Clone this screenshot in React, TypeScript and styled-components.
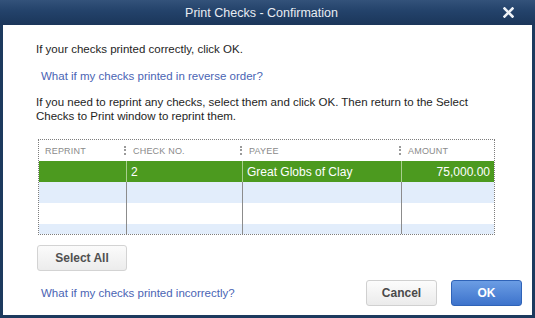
import React from "react";
import styled, { createGlobalStyle } from "styled-components";

const GlobalStyle = createGlobalStyle`
  html, body {
    margin: 0;
    padding: 0;
    background: #ffffff;
  }
  body {
    font-family: "Liberation Sans", Arial, sans-serif;
  }
`;

const Dialog = styled.div`
  width: 535px;
  height: 318px;
  display: flex;
  flex-direction: column;
  box-sizing: border-box;
`;

const TitleBar = styled.div`
  height: 25px;
  flex-shrink: 0;
  display: flex;
  align-items: center;
  justify-content: center;
  position: relative;
  padding-right: 12px;
  background: linear-gradient(to bottom, #33527a 0%, #23426a 45%, #1b365a 100%);
  color: #e8ecf2;
  font-size: 12.5px;
`;

const CloseButton = styled.span`
  position: absolute;
  right: 21px;
  top: 7px;
  width: 11px;
  height: 11px;
  display: flex;
`;

const Body = styled.div`
  flex: 1;
  display: flex;
  flex-direction: column;
  border: 3px solid #1d3a5e;
  border-top: none;
  background: #ffffff;
  padding: 17px 36px 9px 33px;
  font-size: 11.5px;
  color: #1e1e1e;
`;

const Line = styled.div<{ $gap?: number }>`
  line-height: 14px;
  margin-top: ${(p) => p.$gap ?? 0}px;
`;

const Link = styled.a<{ $indent?: number; $gap?: number }>`
  display: block;
  line-height: 14px;
  color: #4a64b4;
  text-decoration: none;
  cursor: pointer;
  margin-left: ${(p) => p.$indent ?? 0}px;
  margin-top: ${(p) => p.$gap ?? 0}px;
`;

const Table = styled.div`
  margin-top: 16px;
  margin-left: 2px;
  width: 455px;
  height: 94px;
  overflow: hidden;
  border: 1px dotted #7d7d7d;
  display: grid;
  grid-template-columns: 88px 116px 159px 92px;
  grid-auto-rows: 21px;
  font-size: 12px;
`;

const HeadCell = styled.div<{ $mark?: boolean }>`
  position: relative;
  display: flex;
  align-items: center;
  padding-left: 6px;
  font-size: 9px;
  letter-spacing: 0.2px;
  color: #8a8a8a;
  background: #ffffff;

  &::before {
    content: "";
    display: ${(p) => (p.$mark ? "block" : "none")};
    position: absolute;
    left: -3px;
    top: 6px;
    height: 9px;
    border-left: 2px dotted #9a9a9a;
  }
`;

const Cell = styled.div<{ $tone: "sel" | "alt" | "plain"; $right?: boolean; $last?: boolean }>`
  display: flex;
  align-items: center;
  justify-content: ${(p) => (p.$right ? "flex-end" : "flex-start")};
  padding: 0 4px;
  background: ${(p) =>
    p.$tone === "sel" ? "#4c9a1f" : p.$tone === "alt" ? "#e2edfb" : "#ffffff"};
  color: ${(p) => (p.$tone === "sel" ? "#ffffff" : "#222222")};
  border-right: ${(p) =>
    p.$last ? "none" : p.$tone === "sel" ? "1px solid #a9cf8f" : "1px solid #8c8c8c"};
`;

const SelectAllButton = styled.button`
  margin-top: 10px;
  margin-left: 1px;
  width: 90px;
  height: 26px;
  border: 1px solid #d3d3d3;
  border-radius: 3px;
  background: linear-gradient(to bottom, #fbfbfb, #ececec);
  color: #505050;
  font-family: inherit;
  font-size: 12px;
  font-weight: bold;
`;

const Footer = styled.div`
  margin-top: 9px;
  display: flex;
  align-items: center;
`;

const Spacer = styled.div`
  flex: 1;
`;

const DialogButton = styled.button<{ $primary?: boolean }>`
  width: 71px;
  height: 26px;
  margin-left: ${(p) => (p.$primary ? 14 : 0)}px;
  margin-right: ${(p) => (p.$primary ? -26 : 0)}px;
  border-radius: 3px;
  font-family: inherit;
  font-size: 12px;
  font-weight: bold;
  border: 1px solid ${(p) => (p.$primary ? "#2f63b8" : "#d0d0d0")};
  color: ${(p) => (p.$primary ? "#ffffff" : "#4a4a4a")};
  background: ${(p) =>
    p.$primary
      ? "linear-gradient(to bottom, #6b9de4, #3d73cc)"
      : "linear-gradient(to bottom, #fcfcfc, #ebebeb)"};
`;

type Row = { check: string; payee: string; amount: string };

const rows: Row[] = [
  { check: "2", payee: "Great Globs of Clay", amount: "75,000.00" },
  { check: "", payee: "", amount: "" },
  { check: "", payee: "", amount: "" },
  { check: "", payee: "", amount: "" },
];

const headers = ["REPRINT", "CHECK NO.", "PAYEE", "AMOUNT"];

const CloseIcon = () => (
  <svg width="11" height="11" viewBox="0 0 11 11">
    <path d="M1.5 1.5 L9.5 9.5 M9.5 1.5 L1.5 9.5" stroke="#eef2f7" strokeWidth="2.6" strokeLinecap="square" />
  </svg>
);

export default function App() {
  return (
    <>
      <GlobalStyle />
      <Dialog>
        <TitleBar>
          Print Checks - Confirmation
          <CloseButton>
            <CloseIcon />
          </CloseButton>
        </TitleBar>
        <Body>
          <Line>If your checks printed correctly, click OK.</Line>
          <Link $indent={5} $gap={13}>What if my checks printed in reverse order?</Link>
          <Line $gap={12}>
            If you need to reprint any checks, select them and click OK. Then return to the Select
            <br />
            Checks to Print window to reprint them.
          </Line>
          <Table>
            {headers.map((h, i) => (
              <HeadCell key={h} $mark={i > 0}>
                {h}
              </HeadCell>
            ))}
            {rows.map((r, i) => {
              const tone = i === 0 ? "sel" : i % 2 === 1 ? "alt" : "plain";
              return (
                <React.Fragment key={i}>
                  <Cell $tone={tone} />
                  <Cell $tone={tone}>{r.check}</Cell>
                  <Cell $tone={tone}>{r.payee}</Cell>
                  <Cell $tone={tone} $right $last>
                    {r.amount}
                  </Cell>
                </React.Fragment>
              );
            })}
          </Table>
          <SelectAllButton>Select All</SelectAllButton>
          <Footer>
            <Link $indent={5}>What if my checks printed incorrectly?</Link>
            <Spacer />
            <DialogButton>Cancel</DialogButton>
            <DialogButton $primary>OK</DialogButton>
          </Footer>
        </Body>
      </Dialog>
    </>
  );
}
